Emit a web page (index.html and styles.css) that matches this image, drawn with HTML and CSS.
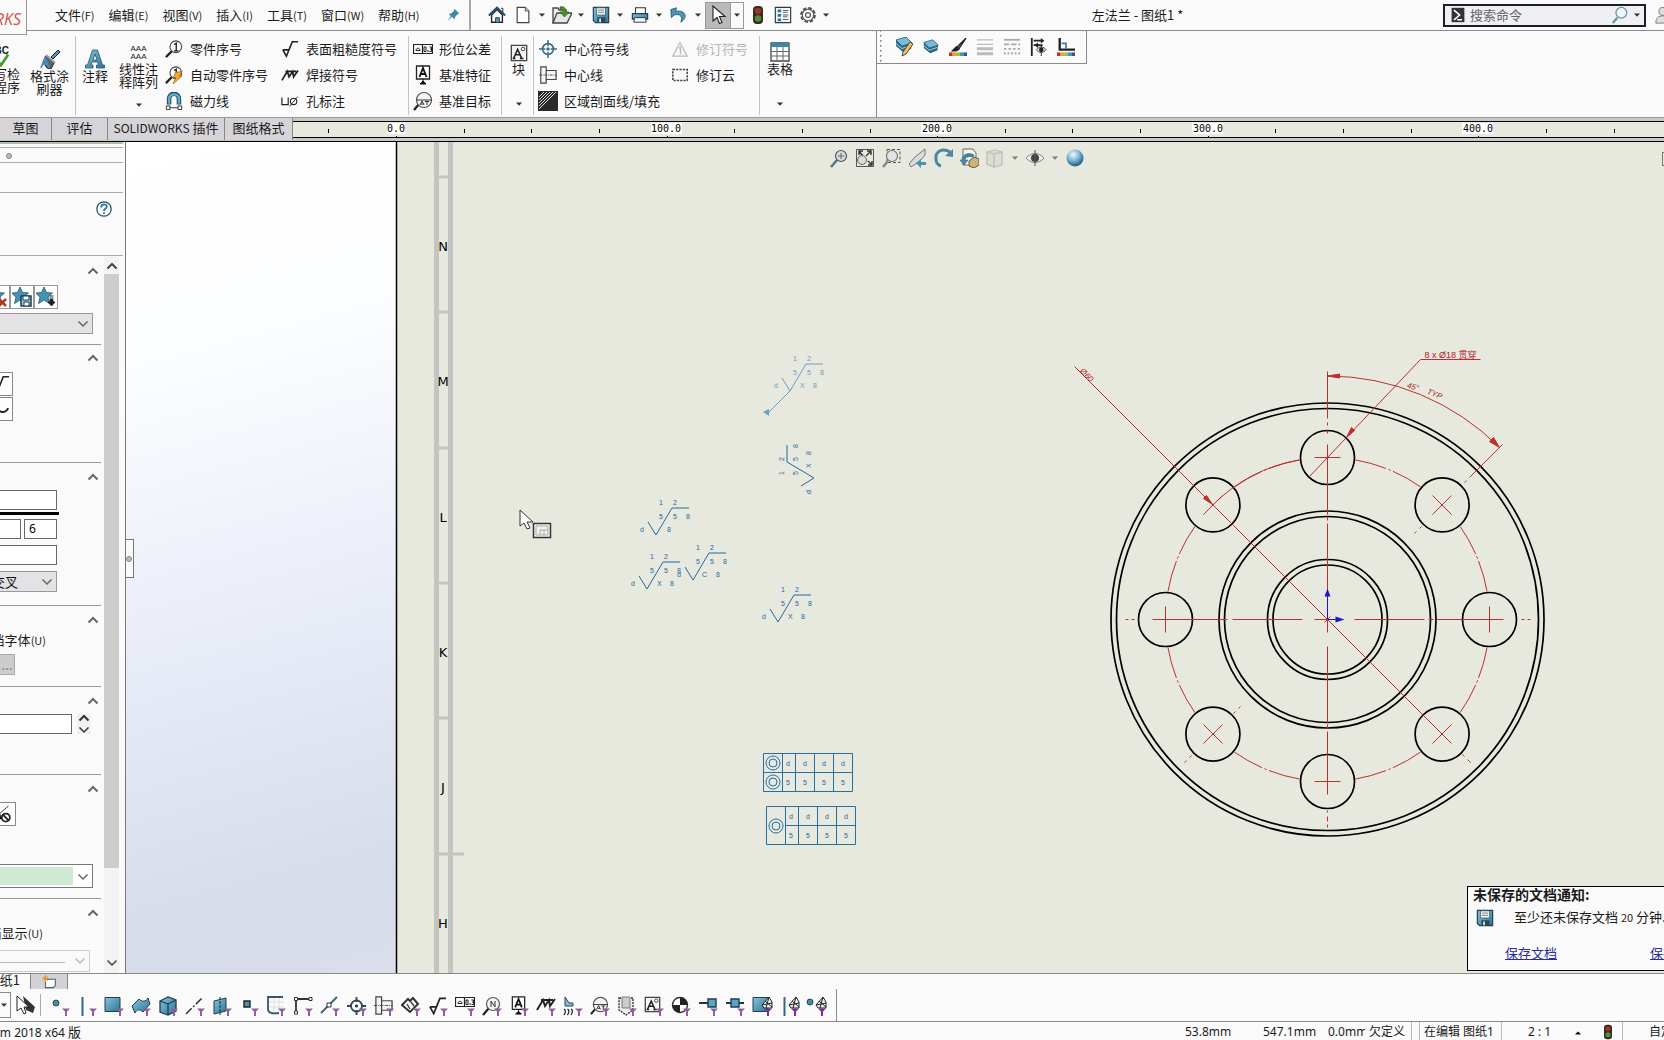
FILE: index.html
```html
<!DOCTYPE html>
<html lang="zh-CN">
<head>
<meta charset="utf-8">
<title>左法兰 - 图纸1</title>
<link rel="stylesheet" href="styles.css">
</head>
<body>
<svg class="sprite" aria-hidden="true">
<defs>
<linearGradient id="blue" x1="0" y1="0" x2="1" y2="1"><stop offset="0" stop-color="#86c3dc"/><stop offset="1" stop-color="#2c7594"/></linearGradient>
<radialGradient id="orb" cx=".4" cy=".3" r=".7"><stop offset="0" stop-color="#f2fbff"/><stop offset=".5" stop-color="#7db8d6"/><stop offset="1" stop-color="#22597a"/></radialGradient>
<symbol id="caret" viewBox="0 0 8 8"><path d="M1 2.500h6L4 5.800z" fill="#333"/></symbol>
<symbol id="up" viewBox="0 0 12 8"><path d="M1.500 6.500 6 2l4.500 4.500" fill="none" stroke="currentColor" stroke-width="2"/></symbol>
<symbol id="down" viewBox="0 0 12 8"><path d="M1.500 1.500 6 6l4.500-4.500" fill="none" stroke="currentColor" stroke-width="1.500"/></symbol>
<symbol id="pin" viewBox="0 0 20 20"><path d="m12 1 7 7-2 .5-4 4-.5 4-4-4L2 19l5-7.500-3.500-3 4-.5 4-4z" fill="#3e86a6"/></symbol>
<symbol id="home" viewBox="0 0 20 20"><path d="M4 10v8h12v-8l-6-6z" fill="#fff" stroke="#222" stroke-width="1.500"/><path d="M1 10.500 10 2l9 8.500" fill="none" stroke="#1f5068" stroke-width="2.500"/><path d="M8.500 18v-5h4v5" fill="#5ba0bd" stroke="#222"/><path d="M14.500 2.500h2V7" stroke="#222" fill="none"/></symbol>
<symbol id="new" viewBox="0 0 20 20"><path d="M3.500 1.500h9l4 4v13h-13z" fill="#fdfdfd" stroke="#444" stroke-width="1.300"/><path d="M12.500 1.500v4h4" fill="#ddd" stroke="#444"/></symbol>
<symbol id="open" viewBox="0 0 20 20"><path d="M1 18V3h5l1 2h7v4" fill="#eee" stroke="#444" stroke-width="1.300"/><path d="m1 18 4-10h15l-5 10z" fill="#e6e8e2" stroke="#444" stroke-width="1.300"/><path d="M8 2c4-1 6 1 6 5h3l-4.500 5L8 7h3c0-2-1-3-3-3z" fill="#49912e" stroke="#255d17" stroke-width=".7"/></symbol>
<symbol id="save" viewBox="0 0 20 20"><path d="M1.500 1.500h17v17H4l-2.500-2.500z" fill="url(#blue)" stroke="#1d3f50" stroke-width="1.300"/><path d="M5 2h10v8H5z" fill="#f1f4f5" stroke="#2c4a58" stroke-width=".7"/><path d="M6.500 4.500h7M6.500 7h7" stroke="#777"/><path d="M6 12.500h9v6H6z" fill="#304650"/><path d="M8 14h2v4H8z" fill="#dbe4e8"/></symbol>
<symbol id="print" viewBox="0 0 20 20"><path d="M5 9V2h11v7" fill="#fff" stroke="#333" stroke-width="1.200"/><path d="M1.500 8.500h17v6h-17z" fill="url(#blue)" stroke="#1d3f50" stroke-width="1.300"/><path d="M4 13h12l1 5H3z" fill="#f6f6f6" stroke="#234"/></symbol>
<symbol id="undo" viewBox="0 0 20 20"><path d="M7 2 1 4l.5 9 3-3c7-2 10 2 7.500 8 8-5 6-14-5.500-12z" fill="#4f94b3" stroke="#24566e"/></symbol>
<symbol id="arrow" viewBox="0 0 20 20"><path d="M5 1v15l4-3.500 2.500 6 2.500-1-2.500-6H17z" fill="#fff" stroke="#222" stroke-width="1.100"/></symbol>
<symbol id="light" viewBox="0 0 20 20"><rect x="5" y="1" width="10" height="18" rx="4" fill="#332b22"/><circle cx="10" cy="6" r="3.300" fill="#a33022"/><circle cx="10" cy="13.500" r="3.300" fill="#4f8d3c"/></symbol>
<symbol id="list" viewBox="0 0 20 20"><path d="M1.500 1.500h17v17h-17z" fill="#f4f7f8" stroke="#2a3d47" stroke-width="1.300"/><path d="M4 4h4v3H4zM4 9h4v3H4zM4 14h4v3H4z" fill="#2f7797"/><path d="M10 5h6M10 7h5M10 10h6M10 12h5M10 15h6" stroke="#555"/></symbol>
<symbol id="gear" viewBox="0 0 20 20"><circle cx="10" cy="10" r="7.500" fill="none" stroke="#555" stroke-width="2.600" stroke-dasharray="3.900 2"/><circle cx="10" cy="10" r="6.300" fill="#fafafa" stroke="#555" stroke-width="1.200"/><circle cx="10" cy="10" r="2.700" fill="none" stroke="#555" stroke-width="1.300"/></symbol>
<symbol id="glass" viewBox="0 0 20 20"><path d="m7 13-5 6" stroke="#6c93a8" stroke-width="2.600"/><circle cx="11.500" cy="7.500" r="6" fill="#eef7fb" stroke="#7a93a0" stroke-width="1.500"/></symbol>
<symbol id="cmd" viewBox="0 0 20 20"><path d="M2 1h16v18H2z" fill="#333"/><path d="m5 4 7 6-7 6M9 16h6" stroke="#fff" stroke-width="2" fill="none"/></symbol>
<symbol id="user" viewBox="0 0 20 20"><circle cx="10" cy="6" r="4.500" fill="#ddd" stroke="#777"/><path d="M2 19c0-6 3-8 8-8s8 2 8 8z" fill="#ddd" stroke="#777"/></symbol>
<symbol id="spell" viewBox="0 0 20 20"><path d="m6 13 4 5 8-12" stroke="#4b9a2e" stroke-width="3" fill="none"/></symbol>
<symbol id="brush" viewBox="0 0 20 20"><path d="m11 8 7-7 2 2-7 7z" fill="#5199b8" stroke="#223"/><path d="m6 7 8 7-3 6-4-1-4-6z" fill="#58656c" stroke="#222"/><path d="m6 6 9 8" stroke="#999" stroke-width="2"/><path d="m1 19 4-10 4 10M3 15h5" stroke="#4a92b2" stroke-width="1.800" fill="none"/></symbol>
<symbol id="note" viewBox="0 0 20 20"><path d="M7.500 1h5l5 15h2v3h-8v-3h2l-1-3H7l-1 3h2v3H.500v-3h2zM10 5l-2 6h4z" fill="url(#blue)" stroke="#24566e" stroke-width=".8"/></symbol>
<symbol id="balloon" viewBox="0 0 20 20"><path d="m8 12-7 7" stroke="#222" stroke-width="2.500"/><circle cx="12" cy="7.500" r="6.500" fill="#fafafa" stroke="#444" stroke-width="1.200"/><path d="m10 5 2.500-1.500V12M10 12h5" stroke="#222" stroke-width="1.500" fill="none"/></symbol>
<symbol id="autob" viewBox="0 0 20 20"><use href="#balloon"/><path d="m12 7 7-1-3 5h3l-10 9 3-7H9z" fill="#f6a92c" stroke="#96611a" stroke-width=".8"/></symbol>
<symbol id="magnet" viewBox="0 0 20 20"><path d="M4.500 14V8c0-8 11-8 11 0v6" fill="none" stroke="#1d4a60" stroke-width="5"/><path d="M4.500 13V8c0-7.500 11-7.500 11 0v5" fill="none" stroke="#66a9c6" stroke-width="2.800"/><path d="M3 17.500h14" stroke="#222"/><path d="M1.500 15.500h4v4h-4zM14.500 15.500h4v4h-4z" fill="#fff" stroke="#222"/></symbol>
<symbol id="rough" viewBox="0 0 20 20"><path d="M2 11h7M2 11l4 7L12.500 2H19" fill="none" stroke="#222" stroke-width="1.800"/></symbol>
<symbol id="weld" viewBox="0 0 20 20"><path d="M1 16 7 6l2 6 4-6 1 6 5-7M5 6h12" fill="none" stroke="#222" stroke-width="1.900"/></symbol>
<symbol id="hole" viewBox="0 0 20 20"><path d="M1 6v8h7V6" fill="none" stroke="#222" stroke-width="1.300"/><circle cx="14" cy="10.500" r="3.500" fill="none" stroke="#222" stroke-width="1.200"/><path d="m9.500 16 9-11" stroke="#222"/></symbol>
<symbol id="gtol" viewBox="0 0 20 20"><path d="M.500 5.500h19v9H.500zM9.500 5v10" fill="#fafafa" stroke="#222" stroke-width="1.200"/><path d="M3 11.500h4c0-3-4-3-4 0M11 8h2v4.500h-2zM15 11v2M16.500 8h2v2h-1 1v2.500h-2" fill="none" stroke="#222"/></symbol>
<symbol id="datum" viewBox="0 0 20 20"><path d="M3.500 1h13v13h-13z" fill="#fff" stroke="#222" stroke-width="1.300"/><path d="m6.500 12 3.500-9 3.500 9M8 9h4" fill="none" stroke="#111" stroke-width="1.800"/><path d="M10 14v3m-3 2h6l-3-3z" stroke="#111" fill="#111"/></symbol>
<symbol id="target" viewBox="0 0 20 20"><path d="m6 13-5 6" stroke="#222" stroke-width="2.200"/><circle cx="11" cy="9" r="7.500" fill="#f5f5f5" stroke="#555" stroke-width="1.200"/><path d="M3.500 9h15M7 14l2-4 2 4M8 13h2.500M12 10.500h4M14 10.500V14" stroke="#333" fill="none"/></symbol>
<symbol id="block" viewBox="0 0 20 20"><path d="M1.500 1.500h17v17h-17z" fill="#f6f6f6" stroke="#444" stroke-width="1.500"/><path d="m4 16 4.500-10L13 16M6 12h5M3 16h3M11 16h4" fill="none" stroke="#222" stroke-width="1.700"/><circle cx="14.500" cy="5.500" r="2" fill="none" stroke="#333"/></symbol>
<symbol id="cmark" viewBox="0 0 20 20"><circle cx="10" cy="10" r="6" fill="none" stroke="#386a80" stroke-width="1.800"/><path d="M10 0v7M10 13v7M0 10h7M13 10h7M8 10h4M10 8v4" stroke="#386a80" stroke-width="1.600"/></symbol>
<symbol id="cline" viewBox="0 0 20 20"><path d="M2 1h6v18H2zM8 5h11v10H8" fill="#f4f4f4" stroke="#444" stroke-width="1.300"/><path d="M0 10h20" stroke="#444" stroke-dasharray="3 1 1 1"/></symbol>
<symbol id="hatch" viewBox="0 0 20 20"><path d="M0 0h20v20H0z" fill="#2a2a2a"/><path d="m1 6 5-5M1 9l8-8M1 12 12 1M1 15 15 1M1 18 18 1" stroke="#ddd"/></symbol>
<symbol id="rev" viewBox="0 0 20 20"><path d="m10 3 8 15H2z" fill="none" stroke="#bbb" stroke-width="1.400"/><path d="M9 9l1.500-1v8" stroke="#bbb" fill="none" stroke-width="1.500"/></symbol>
<symbol id="cloud" viewBox="0 0 20 20"><path d="M2 4h16v12H2z" fill="none" stroke="#444" stroke-width="1.700" stroke-dasharray="2.500 1.200"/></symbol>
<symbol id="table" viewBox="0 0 20 20"><path d="M1 1h18v18H1z" fill="#fff" stroke="#444" stroke-width="1.300"/><path d="M1 1h18v4H1z" fill="#3c86a6"/><path d="M1 9.500h18M1 14h18M7 5v14M13 5v14" stroke="#666"/></symbol>
<symbol id="layer" viewBox="0 0 20 20"><path d="m2 5 10-3 6 6-1 6-8 3-7-6z" fill="#276684"/><path d="m2 5 10-3 6 6-10 3z" fill="#7abbd8" stroke="#2a617b" stroke-width=".8"/><path d="m2 8.500 6 5 9-3" stroke="#b8dcea" fill="none"/></symbol>
<symbol id="layered" viewBox="0 0 20 20"><use href="#layer" y="-2"/><path d="m8 19 1-4 7-10 3 2-7 10z" fill="#eac36c" stroke="#5a4322"/></symbol>
<symbol id="paint" viewBox="0 0 20 20"><path d="M19 0 9 10l2 2z" fill="#4d93b1" stroke="#223" stroke-width="1.500"/><path d="m8 9 4 4-4 2H2z" fill="#222"/></symbol>
<symbol id="rainbow" viewBox="0 0 20 20"><path d="M0 16h4v4H0z" fill="#b73a2c"/><path d="M4 16h4v4H4z" fill="#eda02e"/><path d="M8 16h4v4H8z" fill="#a6bc47"/><path d="M12 16h4v4h-4z" fill="#3e9aa8"/><path d="M16 16h4v4h-4z" fill="#454c8c"/></symbol>
<symbol id="lines" viewBox="0 0 20 20"><path d="M1 2h18M1 7h18" stroke="#bbb" stroke-width="1.500"/><path d="M1 12h18M1 17.500h18" stroke="#bbb" stroke-width="3.200"/></symbol>
<symbol id="styles" viewBox="0 0 20 20"><path d="M1 2h18" stroke="#aaa" stroke-width="2"/><path d="M1 7h18" stroke="#aaa" stroke-width="2" stroke-dasharray="6 2"/><path d="M1 12h18" stroke="#aaa" stroke-width="2" stroke-dasharray="3 2"/><path d="M1 17h18" stroke="#aaa" stroke-width="2.500" stroke-dasharray="2 2"/></symbol>
<symbol id="hide" viewBox="0 0 20 20"><path d="M2 0v20" stroke="#222" stroke-width="2"/><path d="M4 3h9M4 8h10" stroke="#222" stroke-width="2"/><path d="m12 0 4 3-4 3zM9 5 5 8l4 3z" fill="#222"/><path d="M7 13c3-4 8-4 11 0-3 4-8 4-11 0z" fill="#ddd" stroke="#444"/><circle cx="12.500" cy="13" r="2.500" fill="#222"/><path d="M12.500 8v12" stroke="#222"/></symbol>
<symbol id="corner" viewBox="0 0 20 20"><path d="M3 0v13h17" fill="none" stroke="#222" stroke-width="2.600"/><path d="M5 6h5v6" fill="none" stroke="#3e86a6" stroke-width="2"/></symbol>
<symbol id="zoomfit" viewBox="0 0 20 20"><path d="M1.500 1.500h17v17h-17z" fill="none" stroke="#555"/><path d="m11 8 5-5m-4 0h4v4M8 8 4 3m0 4V3h4M13 13l4 4m0-4v4h-4" stroke="#333" stroke-width="1.400" fill="none"/><circle cx="7" cy="12" r="4.500" fill="#d7dcdc" stroke="#666"/></symbol>
<symbol id="zoom1" viewBox="0 0 20 20"><path d="m8 12-6 7" stroke="#50788a" stroke-width="2.600"/><circle cx="12" cy="8" r="5.500" fill="#d3dada" stroke="#555" stroke-width="1.200"/><path d="M12 5v6M9 8h6" stroke="#666"/></symbol>
<symbol id="zoomarea" viewBox="0 0 20 20"><path d="M6 1.500h13v13H6z" fill="none" stroke="#555" stroke-dasharray="3 2"/><path d="m7 13-5 6" stroke="#888" stroke-width="2.600"/><circle cx="11" cy="8" r="5.500" fill="#dfe4e4" stroke="#777" stroke-width="1.200"/></symbol>
<symbol id="prev" viewBox="0 0 20 20"><path d="M18 1 8 9l-6 7 2 3 9-6 5-6z" fill="#d9dddb" stroke="#777"/><path d="m9 15 5-4v3h5v3h-5v3z" fill="#4c91ad"/></symbol>
<symbol id="rotate" viewBox="0 0 20 20"><path d="M17 4C9-1 2 4 3 11c0 3 2 6 5 7" fill="none" stroke="#4a87a3" stroke-width="3"/><path d="m12 8 8-7v8z" fill="#4a87a3"/></symbol>
<symbol id="sheet" viewBox="0 0 20 20"><path d="M4 1h10l3 4v12H4z" fill="#f5f5ee" stroke="#666"/><path d="M15 7C10 4 3 6 3 12l-2 0 4 5 4-5H6c0-3 4-4 8-3z" fill="#448baa" stroke="#24566e" stroke-width=".5"/><path d="m10 13 5-4 5 2v6l-5 3-5-2z" fill="#cbb47c" stroke="#665a3a"/></symbol>
<symbol id="cube" viewBox="0 0 20 20"><path d="M2 4l8-2 7 2v13l-8 2-7-3zM2 4l7 2v13M9 6l8-2" fill="#dcded6" stroke="#bbbdb5" stroke-width="1.200"/></symbol>
<symbol id="eye" viewBox="0 0 20 20"><path d="M1 10c5-6 13-6 18 0-5 6-13 6-18 0z" fill="#eee" stroke="#888"/><circle cx="10" cy="10" r="4" fill="#444"/><path d="M10 2v16" stroke="#555"/></symbol>
<symbol id="ball" viewBox="0 0 20 20"><circle cx="10" cy="10" r="8.500" fill="url(#orb)"/></symbol>
<symbol id="help" viewBox="0 0 20 20"><circle cx="10" cy="10" r="9" fill="#f7fafb" stroke="#23485a" stroke-width="1.500"/><path d="M6.500 8c0-5 7-5 7-1 0 3-3.500 2.500-3.500 5.500M10 14v2.200" fill="none" stroke="#2f7797" stroke-width="2.200"/></symbol>
<symbol id="star" viewBox="0 0 20 20"><path d="m8 0 2.500 5.500 6 .5-4.500 4 1.500 6.500L8 13l-5.500 3.500L4 10-.5 6l6-.5z" fill="#4393b5" stroke="#24566e" stroke-width=".8"/></symbol>
<symbol id="starx" viewBox="0 0 20 20"><use href="#star"/><path d="m11 12 7 7m0-7-7 7" stroke="#a93b27" stroke-width="2.500"/></symbol>
<symbol id="stars" viewBox="0 0 20 20"><use href="#star"/><path d="M9 9h10v10H9z" fill="#9cc5d8" stroke="#1d3f50" stroke-width="1.500"/><path d="M11 9h6v4h-6zM12 15h5v4h-5z" fill="#fff" stroke="#1d3f50"/></symbol>
<symbol id="stard" viewBox="0 0 20 20"><use href="#star"/><path d="M13.500 9h4M13.500 11h4M14 12.500h3V15h2l-3.500 4-3.500-4h2z" fill="#222" stroke="#222"/></symbol>
<symbol id="fun" viewBox="0 0 22 20"><path d="M12 12.500h8l-3 3V20h-2v-4.500z" fill="#8c629b"/></symbol>
<symbol id="f-pt" viewBox="0 0 22 20"><circle cx="6" cy="7" r="3" fill="#4a8aa5" stroke="#24485a"/></symbol>
<symbol id="f-edge" viewBox="0 0 22 20"><path d="M5.500 1v19" stroke="#2e6a84" stroke-width="2"/></symbol>
<symbol id="f-face" viewBox="0 0 22 20"><path d="M1 1.500h15v14H1z" fill="url(#blue)" stroke="#1d3f50"/></symbol>
<symbol id="f-surf" viewBox="0 0 22 20"><path d="m1 10 7-7c3 3 7 3 9-1l2 6-7 8C9 13 6 13 4 17z" fill="url(#blue)" stroke="#1d3f50"/></symbol>
<symbol id="f-body" viewBox="0 0 22 20"><path d="m2 5 8-4 8 3v11l-8 4-8-3zM2 5l8 3v11M10 8l8-4" fill="url(#blue)" stroke="#1d3f50" stroke-width="1.300"/></symbol>
<symbol id="f-axis" viewBox="0 0 22 20"><path d="M1 18 18 1" stroke="#333" stroke-width="1.500" stroke-dasharray="8 2 2 2"/></symbol>
<symbol id="f-plane" viewBox="0 0 22 20"><path d="m2 5 12-3v13L2 18z" fill="url(#blue)" stroke="#1d3f50"/><path d="M8 1v18" stroke="#222" stroke-dasharray="3 1"/></symbol>
<symbol id="f-spt" viewBox="0 0 22 20"><path d="M5 5h6v6H5z" fill="#4a94b3" stroke="#222" stroke-width="1.400"/></symbol>
<symbol id="f-sk" viewBox="0 0 22 20"><path d="M3 6h15M3 11h15M8 2v14M13 2v14" stroke="#ddd"/><path d="M17 1H2v12c0 4 4 5 11 4" fill="none" stroke="#33566a" stroke-width="1.800"/></symbol>
<symbol id="f-seg" viewBox="0 0 22 20"><path d="M3 17V3h15" stroke="#333" stroke-width="1.800" fill="none"/><path d="M1.500 15h3v3h-3zM1.500 1.500h3v3h-3zM16 1.500h3v3h-3z" fill="#fff" stroke="#333"/></symbol>
<symbol id="f-mid" viewBox="0 0 22 20"><path d="M1 17 17 1" stroke="#3f6678" stroke-width="2"/><path d="M7 7h4v4H7z" fill="#fff" stroke="#333"/></symbol>
<symbol id="f-cm" viewBox="0 0 22 20"><circle cx="9.500" cy="10" r="5.500" fill="none" stroke="#345" stroke-width="1.800"/><path d="M9.500 1v5M9.500 14v5M0 10h5M14 10h5M8 10h3M9.500 8.500v3" stroke="#345" stroke-width="1.800"/></symbol>
<symbol id="f-dim" viewBox="0 0 22 20"><path d="m1 9 6-6 2 2 3-3 5 6-8 8z" fill="#fafafa" stroke="#333" stroke-width="2"/><path d="m6 8 3 5m1-7 3 4" stroke="#333" stroke-width="1.300"/></symbol>
<symbol id="f-cos" viewBox="0 0 22 20"><path d="M2 10V1l4 6h4v3z" fill="#8bbccf" stroke="#24485a"/><path d="M1 13c3 2 1 4 0 6M4.500 13c3 2 1 4 0 6M8 13c3 2 1 4 0 6" stroke="#222" fill="none" stroke-width="1.200"/></symbol>
<symbol id="f-end" viewBox="0 0 22 20"><path d="M2 2h14v12l-7 5-7-5z" fill="#eee" stroke="#333" stroke-width="1.400" stroke-dasharray="2 1"/><path d="M5 1h8v11H5z" fill="#ccc" stroke="#555" stroke-width=".7"/></symbol>
<symbol id="f-com" viewBox="0 0 22 20"><circle cx="9" cy="9" r="7.500" fill="#fff" stroke="#333" stroke-width="1.400"/><path d="M9 9V1.500A7.500 7.500 0 0 1 16.500 9zM9 9v7.500A7.500 7.500 0 0 1 1.500 9z" fill="#222"/></symbol>
<symbol id="f-c1" viewBox="0 0 22 20"><path d="M1 7h9" stroke="#234" stroke-width="2"/><path d="M10 3h8v8h-8z" fill="#5ba4c2" stroke="#1d3f50" stroke-width="1.400"/></symbol>
<symbol id="f-c2" viewBox="0 0 22 20"><path d="M1 7h18" stroke="#234" stroke-width="2"/><path d="M6 3h8v8H6z" fill="#5ba4c2" stroke="#1d3f50" stroke-width="1.400"/></symbol>
<symbol id="web" viewBox="0 0 22 20"><path d="m10 9 7-8 3 5v6h-8z" fill="#eee" stroke="#222"/><path d="m10 9 10-2M13 5l7 6M17 1l-3 11" stroke="#222"/><path d="M12 12.500h8l-3 3V20h-2v-4.500z" fill="#7c2f93"/></symbol>
<g id="fin"><path d="M-8-13 0 0 16-27H33" fill="none" stroke="currentColor"/><text class="tiny" x="3" y="-30">1</text><text class="tiny" x="17" y="-30">2</text><text class="tiny" x="3" y="-16">5</text><text class="tiny" x="17" y="-16">5</text><text class="tiny" x="30" y="-16">8</text><text class="tiny" x="-16" y="-3">d</text></g>
</defs>
</svg>

<div class="app">
<header class="menubar">
  <div class="logo">SOLIDWORKS</div>
  <nav class="menus">
    <button>文件<small>(F)</small></button><button>编辑<small>(E)</small></button><button>视图<small>(V)</small></button><button>插入<small>(I)</small></button><button>工具<small>(T)</small></button><button>窗口<small>(W)</small></button><button>帮助<small>(H)</small></button>
  </nav>
  <button class="pin" aria-label="固定"><svg class="i14"><use href="#pin"/></svg></button>
  <div class="quick">
    <button class="q" aria-label="主页"><svg class="i18"><use href="#home"/></svg></button>
    <button class="q w" aria-label="新建"><svg class="i18"><use href="#new"/></svg></button><button class="c" aria-label="新建选项"><svg class="i8"><use href="#caret"/></svg></button>
    <button class="q w" aria-label="打开"><svg class="i20"><use href="#open"/></svg></button><button class="c" aria-label="打开选项"><svg class="i8"><use href="#caret"/></svg></button>
    <button class="q w" aria-label="保存"><svg class="i18"><use href="#save"/></svg></button><button class="c" aria-label="保存选项"><svg class="i8"><use href="#caret"/></svg></button>
    <button class="q w" aria-label="打印"><svg class="i18"><use href="#print"/></svg></button><button class="c" aria-label="打印选项"><svg class="i8"><use href="#caret"/></svg></button>
    <button class="q w" aria-label="撤消"><svg class="i18"><use href="#undo"/></svg></button><button class="c" aria-label="撤消选项"><svg class="i8"><use href="#caret"/></svg></button>
    <span class="pick"><button class="on" aria-label="选择"><svg class="i20"><use href="#arrow"/></svg></button><button class="c" aria-label="选择选项"><svg class="i8"><use href="#caret"/></svg></button></span>
    <button class="q" aria-label="重建模型"><svg class="i20"><use href="#light"/></svg></button>
    <button class="q" aria-label="文件属性"><svg class="i18"><use href="#list"/></svg></button>
    <button class="q" aria-label="选项"><svg class="i18"><use href="#gear"/></svg></button><button class="c" aria-label="更多选项"><svg class="i8"><use href="#caret"/></svg></button>
  </div>
  <div class="title">左法兰 - 图纸1 *</div>
  <div class="search"><svg class="i16"><use href="#cmd"/></svg><input type="text" placeholder="搜索命令" aria-label="搜索命令"><svg class="i18"><use href="#glass"/></svg><svg class="i8"><use href="#caret"/></svg></div>
  <button class="user" aria-label="登录"><svg class="i18"><use href="#user"/></svg></button>
</header>

<section class="ribbonrow">
  <div class="ribbon">
    <div class="grp g0">
      <button class="big spell"><span class="abc">ABC</span><svg class="i18"><use href="#spell"/></svg><span>拼写检<br>验程序</span></button>
      <button class="big"><svg class="i20"><use href="#brush"/></svg><span>格式涂<br>刷器</span></button>
    </div>
    <div class="grp g1">
      <button class="big"><svg class="i20"><use href="#note"/></svg><span>注释</span></button>
      <button class="big patt"><span class="aaa">AAA<br>AAA</span><span>线性注<br>释阵列</span><svg class="i8"><use href="#caret"/></svg></button>
      <div class="col c1">
        <button><svg class="i18"><use href="#balloon"/></svg>零件序号</button>
        <button><svg class="i18"><use href="#autob"/></svg>自动零件序号</button>
        <button><svg class="i18"><use href="#magnet"/></svg>磁力线</button>
      </div>
      <div class="col c2">
        <button><svg class="i18"><use href="#rough"/></svg>表面粗糙度符号</button>
        <button><svg class="i18"><use href="#weld"/></svg>焊接符号</button>
        <button><svg class="i18"><use href="#hole"/></svg>孔标注</button>
      </div>
    </div>
    <div class="grp g2"><div class="col">
        <button><svg class="i20"><use href="#gtol"/></svg>形位公差</button>
        <button><svg class="i20"><use href="#datum"/></svg>基准特征</button>
        <button><svg class="i20"><use href="#target"/></svg>基准目标</button>
    </div></div>
    <div class="grp g3"><button class="big tall"><svg class="i18"><use href="#block"/></svg><span>块</span><svg class="i8"><use href="#caret"/></svg></button></div>
    <div class="grp g4">
      <div class="col c3">
        <button><svg class="i18"><use href="#cmark"/></svg>中心符号线</button>
        <button><svg class="i18"><use href="#cline"/></svg>中心线</button>
        <button><svg class="i20"><use href="#hatch"/></svg>区域剖面线/填充</button>
      </div>
      <div class="col">
        <button disabled><svg class="i18"><use href="#rev"/></svg>修订符号</button>
        <button><svg class="i18"><use href="#cloud"/></svg>修订云</button>
      </div>
    </div>
    <div class="grp g5"><button class="big tall"><svg class="i20"><use href="#table"/></svg><span>表格</span><svg class="i8"><use href="#caret"/></svg></button></div>
  </div>
  <div class="linebar">
    <button aria-label="图层属性"><svg class="i20"><use href="#layered"/></svg></button>
    <button aria-label="更改图层"><svg class="i18"><use href="#layer"/></svg></button>
    <button aria-label="线色"><svg class="i18"><use href="#paint"/><use href="#rainbow"/></svg></button>
    <button aria-label="线粗"><svg class="i18"><use href="#lines"/></svg></button>
    <button aria-label="线条样式"><svg class="i18"><use href="#styles"/></svg></button>
    <button aria-label="隐藏边线"><svg class="i18"><use href="#hide"/></svg></button>
    <button aria-label="颜色显示模式"><svg class="i18"><use href="#corner"/><use href="#rainbow"/></svg></button>
  </div>
</section>

<div class="tabrow">
  <div class="tabs"><button class="t1">草图</button><button class="t2">评估</button><button class="t3"><span><span class="latin">SOLIDWORKS</span> 插件</span></button><button class="t4">图纸格式</button></div>
  <svg class="ruler"><g transform="translate(-293 -121)">
    <path d="M328 128v4M464 128v4M531 128v4M599 128v4M734 128v4M802 128v4M870 128v4M1005 128v4M1072 128v4M1140 128v4M1275 128v4M1343 128v4M1411 128v4M1546 128v4M1614 128v4" stroke="#000" transform="translate(.5 0)"/>
    <path d="M396 135v3M667 135v3M937 135v3M1208 135v3M1478 135v3" stroke="#000" transform="translate(.5 0)"/>
    <path d="M387 122h18v11h-18zM651 122h31v11h-31zM921 122h31v11h-31zM1192 122h31v11h-31zM1462 122h31v11h-31z" fill="#fff"/>
    <text x="396" y="131">0.0</text><text x="666" y="131">100.0</text><text x="937" y="131">200.0</text><text x="1208" y="131">300.0</text><text x="1478" y="131">400.0</text>
  </g></svg>
</div>

<main class="work">
  <aside class="panel">
    <div class="p1"></div><div class="p2"><i class="dot"></i></div><div class="p3"></div>
    <div class="p4"><button aria-label="帮助"><svg class="i16"><use href="#help"/></svg></button></div>
    <div class="pbody">
      <div class="secs">
        <section class="s1"><button class="fold" aria-label="折叠样式"><svg class="chev"><use href="#up"/></svg></button>
          <div class="stars"><button aria-label="删除样式"><svg class="i20"><use href="#starx"/></svg></button><button aria-label="保存样式"><svg class="i20"><use href="#stars"/></svg></button><button aria-label="装入样式"><svg class="i20"><use href="#stard"/></svg></button></div>
          <div class="sel w93 gray"><select aria-label="样式"><option></option></select><svg class="chev"><use href="#down"/></svg></div></section>
        <section class="s2"><button class="fold" aria-label="折叠符号"><svg class="chev"><use href="#up"/></svg></button>
          <button class="sq" aria-label="基本"><svg class="i18"><use href="#rough"/></svg></button>
          <button class="sq" aria-label="局部"><svg class="i18" viewBox="0 0 20 20"><path d="M5 8c3 7 10 7 13 1" fill="none" stroke="#222" stroke-width="2.200"/></svg></button></section>
        <section class="s3"><button class="fold" aria-label="折叠符号布局"><svg class="chev"><use href="#up"/></svg></button>
          <input class="w57" type="text" aria-label="加工方法">
          <div class="thick"></div>
          <div class="pair"><input class="w21" type="text" aria-label="最小粗糙度"><input class="w33" type="text" value="6" aria-label="最大粗糙度"></div>
          <input class="w57" type="text" aria-label="取样长度">
          <div class="sel w57 gray"><select aria-label="刀痕方向"><option>交叉</option></select><svg class="chev"><use href="#down"/></svg></div></section>
        <section class="s4"><button class="fold" aria-label="折叠格式"><svg class="chev"><use href="#up"/></svg></button>
          <div class="lab l46"><span>使用文档字体<small>(U)</small></span></div>
          <button class="dots" disabled>...</button></section>
        <section class="s5"><button class="fold" aria-label="折叠角度"><svg class="chev"><use href="#up"/></svg></button>
          <div class="pair"><input class="w72" type="text" aria-label="角度"><span class="spin"><svg class="chev"><use href="#up"/></svg><svg class="chev"><use href="#down"/></svg></span></div></section>
        <section class="s6"><button class="fold" aria-label="折叠引线"><svg class="chev"><use href="#up"/></svg></button>
          <button class="sq w16" aria-label="无引线"><svg class="i18" viewBox="0 0 20 20"><path d="m0 14 15-13" stroke="#222"/><path d="m0 14 6-4 1 6z"/><circle cx="12" cy="14" r="4.500" fill="#fff" stroke="#222" stroke-width="2"/><path d="m9 11 6 6" stroke="#222" stroke-width="2"/></svg></button>
          <div class="sel w93 green"><select aria-label="箭头样式"><option></option></select><svg class="chev"><use href="#down"/></svg></div></section>
        <section class="s7"><button class="fold" aria-label="折叠引线样式"><svg class="chev"><use href="#up"/></svg></button>
          <div class="lab l43"><span>使用文档显示<small>(U)</small></span></div>
          <div class="sel w90 off"><select aria-label="线条样式" disabled><option></option></select><svg class="chev"><use href="#down"/></svg></div></section>
      </div>
      <div class="scroll"><svg class="chev"><use href="#up"/></svg><div class="thumb"></div><svg class="chev"><use href="#down"/></svg></div>
    </div>
  </aside>
  <section class="view">
    <svg class="sheet">
    <g transform="translate(-126 -142)">
      <rect x="396" y="140" width="4000" height="3000" fill="#e7e9df"/>
      <path d="M396.500 140v3000" stroke="#000" stroke-width="1.500"/>
      <path d="M436.500 140v3000M450.500 140v3000" stroke="#c4c4c1" stroke-width="5"/>
      <path d="M439 177h9M439 312h9M439 448h9M439 583h9M439 718h9M439 854h25" stroke="#c4c4c1" stroke-width="3"/>
      <g class="zone"><text x="443" y="251">N</text><text x="443" y="386">M</text><text x="443" y="522">L</text><text x="443" y="657">K</text><text x="443" y="792">J</text><text x="443" y="928">H</text></g>
      <g class="fin">
        <g class="pale"><g transform="translate(790 391)"><use href="#fin"/><text class="tiny" x="10" y="-3">X</text><text class="tiny" x="23" y="-3">8</text><path d="M0 0-21 21" stroke="currentColor"/><path d="m-27 21 6-3v7z" fill="currentColor"/></g></g>
        <g transform="translate(814 478) rotate(-90)"><use href="#fin"/><text class="tiny" x="10" y="-3">X</text><text class="tiny" x="23" y="-3">8</text></g>
        <g transform="translate(656 535)"><use href="#fin"/><text class="tiny" x="11" y="-3">8</text></g>
        <g transform="translate(647 589)"><use href="#fin"/><text class="tiny" x="10" y="-3">X</text><text class="tiny" x="23" y="-3">8</text></g>
        <g transform="translate(693 580)"><use href="#fin"/><text class="tiny" x="9" y="-3">C</text><text class="tiny" x="23" y="-3">8</text></g>
        <g transform="translate(778 622)"><use href="#fin"/><text class="tiny" x="10" y="-3">X</text><text class="tiny" x="23" y="-3">8</text></g>
      </g>
      <g class="tbl">
        <path d="M763.500 753.500h89v38h-89zM763.500 772.500h89M782.500 753.500v38M795.500 753.500v38M814.500 753.500v38M833.500 753.500v38"/>
        <path d="M766.500 806.500h89v38h-89zM785.500 825.500h70M785.500 806.500v38M798.500 806.500v38M817.500 806.500v38M836.500 806.500v38"/>
        <circle cx="773" cy="763" r="7"/><circle cx="773" cy="763" r="4"/><circle cx="773" cy="782" r="7"/><circle cx="773" cy="782" r="4"/><circle cx="776" cy="826" r="7"/><circle cx="776" cy="826" r="4"/>
        <text class="tiny" x="786" y="766">d</text><text class="tiny" x="803" y="766">d</text><text class="tiny" x="822" y="766">d</text><text class="tiny" x="841" y="766">d</text>
        <text class="tiny" x="786" y="785">5</text><text class="tiny" x="803" y="785">5</text><text class="tiny" x="822" y="785">5</text><text class="tiny" x="841" y="785">5</text>
        <text class="tiny" x="789" y="819">d</text><text class="tiny" x="806" y="819">d</text><text class="tiny" x="825" y="819">d</text><text class="tiny" x="844" y="819">d</text>
        <text class="tiny" x="789" y="838">5</text><text class="tiny" x="806" y="838">5</text><text class="tiny" x="825" y="838">5</text><text class="tiny" x="844" y="838">5</text>
      </g>
      <g transform="translate(1327.500 619.500)">
        <g fill="none" stroke="#000" stroke-width="1.700">
          <circle r="216.500"/><circle r="211"/><circle r="108.500"/><circle r="103"/><circle r="60"/><circle r="54.500"/>
          <circle cx="162" r="27"/><circle cx="-162" r="27"/><circle cy="162" r="27"/><circle cy="-162" r="27"/>
          <circle cx="114.600" cy="114.600" r="27"/><circle cx="-114.600" cy="114.600" r="27"/><circle cx="114.600" cy="-114.600" r="27"/><circle cx="-114.600" cy="-114.600" r="27"/>
        </g>
        <g class="red">
          <circle r="162" pathLength="800" stroke-dasharray="0 22 25 2 2 2 25 22"/>
          <path d="M-114.600-114.600A162 162 0 0 1-28-159.600"/>
          <path d="M0-248v47m0 4v3m0 5v3M0-175v70m0 2v4m0 3v70M0-13v26M0 27v76m0 2v4m0 3v63m0 16v2m0 4v5m0 3v3M-202 0h3m3 0h3m3 0h2M-175 0h75m5 0h70M-13 0h26M27 0h70m4 0h5m3 0h67M194 0h3m3 0h3"/>
          <path d="M-13-162h26M-13 162h26M-162-13v26M162-13v26M105-124l19 19m0-19-19 19M-124 105l19 19m0-19-19 19M105 124l19-19M-124-105l19-19"/>
          <path d="m175-175-33 33m-3 3-2 2M94-93l-2 2m-3 3-2 2M-94 94l2-2m3-3 2-2M-143 143l2-2m3-3 2-2M135 135l2 2m3 3 3 3"/>
          <path d="M-253-253 124 124M153-260H93L-18-143"/>
          <path d="M0-243.500A243.500 243.500 0 0 1 172-172"/>
          <path class="head" d="m0-243.500 12-2v4zM172-172l-10-6 4-4zM-115-115l-9-6 3-3zM19-182l8-7-3-3z"/>
          <text class="tilt" transform="translate(-248 -248) rotate(45)">Ø60</text>
          <text class="tilt" transform="translate(79 -232) rotate(17)">45°</text><text class="tilt" transform="translate(99 -226) rotate(22)">TYP</text>
          <text x="97" y="-262">8 x Ø18 贯穿</text>
        </g>
        <path d="M0 0v-25M0 0h10" stroke="#2412c8"/><path d="M0-31-3-23h6zM17 0 8-3v6z" fill="#2412c8"/><path d="m-3-3 6 6m0-6-6 6" stroke="#a33"/>
      </g>
      <path d="M520 510v16l4-3 3 6 3-1-3-6h6z" fill="#fff" stroke="#333"/>
      <rect x="533.500" y="523.500" width="17" height="14" fill="#f2f2ee" stroke="#333" stroke-width="1.500"/><path d="M536 526h12v9h-12zM540 535v-5h8M544 530v5" fill="none" stroke="#aaa"/>
    </g></svg>
    <div class="hud">
      <button aria-label="整屏显示全图"><svg class="i20"><use href="#zoom1"/></svg></button><button aria-label="整屏显示"><svg class="i20"><use href="#zoomfit"/></svg></button><button aria-label="局部放大"><svg class="i20"><use href="#zoomarea"/></svg></button><button aria-label="上一视图"><svg class="i20"><use href="#prev"/></svg></button><button aria-label="旋转视图"><svg class="i20"><use href="#rotate"/></svg></button><button aria-label="3D 工程图视图"><svg class="i20"><use href="#sheet"/></svg></button><button aria-label="显示样式"><svg class="i20"><use href="#cube"/></svg></button><button class="c" aria-label="显示样式选项"><svg class="i8"><use href="#caret"/></svg></button><button aria-label="隐藏显示项目"><svg class="i20"><use href="#eye"/></svg></button><button class="c" aria-label="隐藏选项"><svg class="i8"><use href="#caret"/></svg></button><button aria-label="外观"><svg class="i20"><use href="#ball"/></svg></button>
    </div>
    <button class="flyout" aria-label="收起面板"><i class="dot"></i></button>
    <i class="winbtn"></i>
    <div class="toast">
      <strong>未保存的文档通知:</strong>
      <div class="msg"><svg class="i18"><use href="#save"/></svg><span>至少还未保存文档 <small>20</small> 分钟.</span></div>
      <div class="links"><a href="#save">保存文档</a><a href="#all">保存所有文档</a></div>
    </div>
  </section>
</main>

<footer class="bottom">
  <div class="sheets"><button class="st"><span>图纸1</span></button><button class="add" aria-label="添加图纸"><svg class="i14" viewBox="0 0 20 20"><path d="M5 6h14v9l-3 3H5z" fill="#fff" stroke="#3b6475" stroke-width="1.500"/><path d="M5 0v10M0 5h10M2 2l6 6m0-6L2 8" stroke="#e79a2c" stroke-width="1.500"/></svg></button></div>
  <div class="filters">
    <button class="fcombo" aria-label="过滤器选项"><svg class="i8"><use href="#caret"/></svg></button>
    <button class="fsel" aria-label="选择"><svg class="i20" viewBox="0 0 20 20"><path d="m7 1 12 11-2 6-7-3z" fill="#333"/><path d="M1 1v15l4-3 3 6 2-1-2-6h5z" fill="#fff" stroke="#222"/></svg></button>
    <div class="flist">
      <button aria-label="顶点"><svg><use href="#f-pt"/><use href="#fun"/></svg></button><button aria-label="边线"><svg><use href="#f-edge"/><use href="#fun"/></svg></button><button aria-label="面"><svg><use href="#f-face"/><use href="#fun"/></svg></button><button aria-label="曲面实体"><svg><use href="#f-surf"/><use href="#fun"/></svg></button><button aria-label="实体"><svg><use href="#f-body"/><use href="#fun"/></svg></button><button aria-label="基准轴"><svg><use href="#f-axis"/><use href="#fun"/></svg></button><button aria-label="基准面"><svg><use href="#f-plane"/><use href="#fun"/></svg></button><button aria-label="草图点"><svg><use href="#f-spt"/><use href="#fun"/></svg></button><button aria-label="草图"><svg><use href="#f-sk"/><use href="#fun"/></svg></button><button aria-label="草图线段"><svg><use href="#f-seg"/><use href="#fun"/></svg></button><button aria-label="中点"><svg><use href="#f-mid"/><use href="#fun"/></svg></button><button aria-label="中心符号"><svg><use href="#f-cm"/><use href="#fun"/></svg></button><button aria-label="中心线"><svg><use href="#cline" width="19" height="19"/><use href="#fun"/></svg></button><button aria-label="尺寸"><svg><use href="#f-dim"/><use href="#fun"/></svg></button><button aria-label="表面粗糙度"><svg><use href="#rough" width="19" height="20"/><use href="#fun"/></svg></button><button aria-label="形位公差"><svg><use href="#gtol" y="-4" width="20" height="20"/><use href="#fun"/></svg></button><button aria-label="注释"><svg viewBox="0 0 22 20"><path d="m7 12-6 7" stroke="#222" stroke-width="2.200"/><circle cx="11" cy="8" r="6.500" fill="#f5f5f5" stroke="#555" stroke-width="1.200"/><path d="M9 11V5l4 6V5" stroke="#333" fill="none"/><use href="#fun"/></svg></button><button aria-label="基准特征"><svg><use href="#datum" width="19" height="19"/><use href="#fun"/></svg></button><button aria-label="焊接符号"><svg><use href="#weld" y="-2" width="20" height="20"/><use href="#fun"/></svg></button><button aria-label="焊缝"><svg><use href="#f-cos"/><use href="#fun"/></svg></button><button aria-label="基准目标"><svg><use href="#target" width="19" height="19"/><use href="#fun"/></svg></button><button aria-label="装饰螺纹线"><svg><use href="#f-end"/><use href="#fun"/></svg></button><button aria-label="块"><svg><use href="#block" width="17" height="17"/><use href="#fun"/></svg></button><button aria-label="质心"><svg><use href="#f-com"/><use href="#fun"/></svg></button><button aria-label="连接点"><svg><use href="#f-c1"/><use href="#fun"/></svg></button><button aria-label="步路点"><svg><use href="#f-c2"/><use href="#fun"/></svg></button><button aria-label="网格面"><svg><use href="#f-face"/><use href="#web"/></svg></button><button aria-label="网格边线"><svg><use href="#f-edge"/><use href="#web"/></svg></button><button aria-label="网格顶点"><svg><use href="#f-pt" x="-2" y="-1"/><use href="#web"/></svg></button>
    </div>
  </div>
</footer>
<div class="status">
  <div class="ver"><span>SOLIDWORKS Premium 2018 x64 <b>版</b></span></div>
  <span class="x">53.8mm</span><span class="y">547.1mm</span><span class="z">0.0mm</span><span class="def">欠定义</span><span class="edit">在编辑 图纸1</span><span class="scale">2 : 1</span><span class="tri"><svg class="i8" viewBox="0 0 8 8"><path d="m1 5.500 3-3 3 3z"/></svg></span><span class="tl"><svg class="i16"><use href="#light"/></svg></span><span class="cust">自定义</span>
</div>
</div>
</body>
</html>
```
FILE: styles.css
```css
* { box-sizing: border-box; }
body { margin: 0; background: #fafafa; color: #1a1a1a; font: 13px/16px "Noto Sans CJK SC", "Noto Sans", sans-serif; }
button { margin: 0; padding: 0; border: 0; background: none; color: inherit; font: inherit; display: flex; align-items: center; justify-content: center; flex: none; white-space: nowrap; }
button[disabled] { color: #b5b5b5; }
small { font-size: 11px; }
svg { display: block; flex: none; }
.sprite { position: absolute; width: 0; height: 0; }
.i8 { width: 8px; height: 8px; }
.i14 { width: 14px; height: 14px; }
.i16 { width: 16px; height: 16px; }
.i18 { width: 18px; height: 18px; }
.i20 { width: 20px; height: 20px; }
.chev { width: 12px; height: 8px; color: #666; }
.dot { width: 6px; height: 6px; border-radius: 50%; background: #bbb; border: 1px solid #888; }

.app { min-height: 100vh; display: flex; flex-direction: column; overflow: hidden; }

.menubar { position: relative; height: 31px; flex: none; display: flex; align-items: center; border-bottom: 1px solid #8a8a8a; }
.logo { position: absolute; left: 0; top: 0; z-index: 2; width: 27px; height: 35px; padding: 8px 5px 0 0; display: flex; justify-content: flex-end; overflow: hidden; border: solid #999; border-width: 0 1px 1px 0; background: #fafafa; color: #d2534b; font: italic 16px/22px "Open Sans", sans-serif; }
.menus { display: flex; gap: 14px; width: 421px; padding-left: 55px; }
.pin { width: 50px; height: 30px; padding-left: 16px; border-right: 2px solid #aaa; }
.quick { display: flex; align-items: center; padding-left: 13px; }
.q { width: 25px; height: 26px; }
.q.w { width: 27px; }
.c { width: 12px; height: 26px; }
.pick { display: flex; margin: 0 1px; border: 1px solid #999; }
.pick button { height: 25px; }
.pick .on { width: 25px; background: #b9b9b9; border-right: 1px solid #999; }
.title { flex: 1; text-align: center; }
.search { width: 203px; height: 23px; margin-right: 8px; padding: 0 3px 0 5px; display: flex; align-items: center; gap: 4px; border: 2px solid #1d1d2a; background: #eef0f4; }
.search input { flex: 1; width: 20px; border: 0; padding: 0; background: none; font: inherit; }
.search input::placeholder { color: #666; opacity: 1; }
.user { width: 10px; justify-content: flex-start; overflow: hidden; }

.ribbonrow { display: flex; align-items: flex-start; height: 86px; flex: none; }
.ribbon { display: flex; width: 877px; height: 86px; padding-top: 5px; border-right: 1px solid #888; }
.grp { display: flex; align-items: flex-start; height: 79px; border-right: 1px solid #c4c4c4; }
.grp:last-child { border: 0; }
.big { flex-direction: column; justify-content: flex-start; line-height: 13px; width: 41px; padding-top: 13px; }
.g0 { width: 76px; }
.g0 .big { margin-left: 8px; }
.g0 .spell { margin-left: -20px; position: relative; }
.abc { position: absolute; top: 9px; right: 12px; font: bold 10px/12px "Liberation Sans", sans-serif; }
.g1 { width: 333px; }
.g1 .big { width: 38px; }
.g1 .patt { width: 41px; margin-left: 4px; padding-top: 9px; }
.big .aaa { font: 8px/8px "Liberation Sans", sans-serif; margin-bottom: 1px; }
.patt .i8 { margin-top: 13px; }
.col { display: flex; flex-direction: column; }
.col button { height: 26px; gap: 7px; justify-content: flex-start; }
.col .i20 { margin: 0 -1px; }
.c1 { width: 121px; padding-left: 6px; }
.c1 button { width: 108px; }
.c2 { width: 120px; padding-left: 1px; }
.g2 { width: 93px; padding-left: 5px; }
.g3 { width: 32px; }
.g4 { width: 226px; padding-left: 5px; }
.c3 { width: 132px; }
.g5 { width: 40px; }
.tall { width: 33px; padding-top: 8px; }
.g5 .tall { width: 40px; padding-top: 6px; }
.tall .i8 { margin-top: 25px; }
.linebar { display: flex; align-items: center; width: 210px; height: 33px; padding-left: 13px; border: solid #888; border-width: 0 1px 1px 0; background: radial-gradient(circle, #999 1px, transparent 1px) 1px 2px / 5px 5px repeat-y; }
.linebar button { width: 27px; height: 30px; }

.tabrow { display: flex; height: 24px; flex: none; background: #c6c8c8; border-top: 1px solid #999; }
.tabs { display: flex; width: 293px; height: 22px; }
.tabs button { height: 22px; padding-bottom: 2px; background: #d6d4d9; border-right: 1px solid #888; }
.latin { font-size: 12px; }
.t1 { width: 52px; }
.t2 { width: 56px; }
.t3 { width: 117px; }
.t4 { width: 68px; }
.ruler { flex: 1; height: 17px; margin-top: 3px; background: #e7e9df; border: solid #000; border-width: 1px 0; }
.ruler text { font: 10px "DejaVu Sans Mono", monospace; text-anchor: middle; }

.work { flex: 1; display: flex; min-height: 600px; border-top: 1px solid #000; }
.panel { width: 126px; flex: none; display: flex; flex-direction: column; border-right: 1px solid #777; }
.panel > div { margin-right: 2px; }
.p1 { height: 6px; border-top: 2px solid #b4bab0; border-bottom: 1px solid #aaa; }
.p2 { height: 15px; padding: 5px 6px; border-bottom: 1px solid #aaa; }
.p2 .dot { display: block; }
.p3 { height: 30px; border-bottom: 1px solid #aaa; }
.p4 { height: 63px; padding: 8px 11px; display: flex; justify-content: flex-end; border-bottom: 1px solid #aaa; }
.p4 button { height: 16px; }
.pbody { flex: 1; display: flex; justify-content: space-between; height: 0; }
.secs { width: 101px; overflow: hidden; }
.secs section { display: flex; flex-direction: column; align-items: flex-start; border-bottom: 1px solid #999; }
.secs section:last-child { border: 0; }
.fold { height: 27px; width: 99px; justify-content: flex-end; }
.s1 { height: 89px; padding-top: 1px; }
.s2 { height: 118px; gap: 1px; }
.s2 .fold { height: 26px; }
.s3 { height: 143px; }
.s4 { height: 81px; }
.s5 { height: 88px; }
.s6 { height: 124px; }
.s7 { height: 74px; }
.stars { display: flex; margin: 1px 0 4px -14px; }
.stars button { width: 24px; height: 24px; border: 1px solid #999; background: #fff; }
.sq { width: 24px; height: 24px; margin-left: -11px; border: 1px solid #888; background: #fff; }
.w16 { margin: 0 0 38px -8px; }
.secs input { height: 20px; border: 1px solid #666; border-left: 0; background: #fff; padding: 0 4px 1px; font: 12px "Noto Sans", sans-serif; }
.secs .w57 { width: 57px; }
.secs .w33 { width: 33px; border-left: 1px solid #666; }
.secs .w21 { width: 21px; }
.secs .w72 { width: 72px; }
.thick { width: 59px; height: 3px; margin: 2px 0 4px; background: #000; }
.pair { display: flex; gap: 3px; margin-bottom: 6px; }
.sel { position: relative; height: 21px; border: 1px solid #999; border-left: 0; }
.s3 .sel { margin-top: 6px; }
.sel select { width: 100%; height: 100%; border: 0; padding: 0; appearance: none; background: none; font: inherit; color: #111; }
.s3 select { margin-left: -8px; display: block; }
.sel .chev { position: absolute; right: 3px; top: 6px; }
.gray { background: #e4e2e4; }
.sel.w93 { width: 93px; }
.sel.w90 { width: 90px; height: 22px; margin-top: 9px; border-color: #ccc; }
.off .chev { color: #bbb; }
.off::before { content: ""; position: absolute; left: 0; top: 11px; width: 65px; border-top: 1px solid #bbb; }
.green { background: linear-gradient(#cfe9d2, #cfe9d2) 0 2px / 73px 18px no-repeat #fff; }
.sel.green { height: 24px; border-color: #777; }
.sel.green .chev { top: 8px; }
.lab { height: 15px; line-height: 14px; display: flex; justify-content: flex-end; overflow: hidden; white-space: nowrap; }
.l46 { width: 46px; margin-bottom: 6px; }
.l43 { width: 43px; }
.dots { width: 15px; height: 21px; background: #ccc; border: 1px solid #aaa; border-left: 0; }
.secs .dots { color: #777; }
.spin { width: 14px; margin-left: 2px; display: flex; flex-direction: column; justify-content: space-between; align-items: center; background: #f0f0f0; }
.spin .chev { color: #333; }
.scroll { width: 15px; margin-right: 4px; padding: 6px 0; display: flex; flex-direction: column; align-items: center; background: #f3f3f3; }
.scroll .chev { color: #444; }
.scroll .thumb { width: 15px; flex: 593 1 0; margin: 4px 0 0; background: #cdcdcd; }
.scroll::after { content: ""; order: 1; flex: 91 1 0; }
.scroll .chev:last-child { order: 2; }

.view { flex: 1; position: relative; overflow: hidden; background: linear-gradient(165deg, #fff 0, #fcfdff 25%, #e6eaf6 62%, #d7dcea 88%, #dadeeb 100%) 0 0 / 270px 100% no-repeat; }
.sheet { position: absolute; inset: 0; width: 100%; height: 100%; }
.zone text { font: 13px "DejaVu Sans", sans-serif; text-anchor: middle; fill: #000; }
.fin { color: #25689c; }
.fin .pale { color: #6f9bc4; }
.tiny { font: 7px "Liberation Sans", sans-serif; fill: currentColor; stroke: none; }
.tbl { color: #25689c; fill: none; stroke: #25719f; stroke-width: 1; }
.red { fill: none; stroke: #bd2e2e; stroke-width: 1; }
.red .head { fill: #bd2e2e; }
.red text { font: 9px "Liberation Sans", "Noto Sans CJK SC", sans-serif; fill: #b02020; stroke: none; }
.red .tilt { font-size: 8px; font-style: italic; }
.hud { position: absolute; left: 700px; top: 4px; display: flex; align-items: center; }
.hud button { width: 26px; height: 24px; }
.hud .c { width: 14px; opacity: .6; }
.flyout { position: absolute; left: -1px; top: 397px; width: 9px; height: 39px; background: #fafafa; border: 1px solid #777; border-left: 0; }
.winbtn { position: absolute; right: 0; top: 10px; width: 2px; height: 14px; border: 1px solid #777; border-right: 0; }
.toast { position: absolute; right: -80px; bottom: 2px; width: 277px; height: 85px; padding: 0 5px; border: 1px solid #000; background: #fafafa; white-space: nowrap; }
.toast strong { display: block; font-size: 14px; line-height: 14px; }
.msg { display: flex; align-items: flex-start; gap: 20px; padding: 0 3px; margin-top: 8px; }
.links { display: flex; justify-content: space-between; width: 223px; margin: 18px 0 0 32px; }
.links a { color: #2b2ba0; }
.links a + a { width: 78px; }

.bottom { height: 49px; flex: none; border: solid #888; border-width: 1px 0; }
.sheets { display: flex; height: 15px; overflow: hidden; }
.st { width: 31px; height: 15px; padding: 0 10px 3px 0; justify-content: flex-end; overflow: hidden; border-right: 1px solid #888; }
.add { width: 37px; height: 15px; background: #d3d3d6; border-right: 1px solid #888; }
.filters { display: flex; align-items: center; height: 32px; width: 837px; border-right: 1px solid #888; }
.fcombo { width: 11px; height: 26px; border: 1px solid #888; border-left: 0; justify-content: flex-start; }
.fsel { width: 30px; height: 22px; border-right: 1px solid #aaa; margin-right: 6px; }
.flist { display: flex; padding-top: 1px; }
.flist button { width: 27px; height: 24px; }
.flist svg { width: 22px; height: 20px; }

.status { height: 18px; flex: none; display: flex; align-items: flex-start; font: 12px/20px "Noto Sans", "Noto Sans CJK SC", sans-serif; white-space: nowrap; }
.status b { font-weight: 400; font-size: 13px; }
.status > * { height: 18px; }
.ver { width: 81px; display: flex; justify-content: flex-end; overflow: hidden; margin-right: auto; }
.x { width: 78px; }
.y { width: 65px; }
.z { width: 37px; margin-right: 4px; overflow: hidden; }
.def { width: 43px; border-right: 1px solid #bbb; }
.edit { width: 83px; margin-left: 7px; padding-left: 4px; border: solid #bbb; border-width: 0 1px; }
.scale { width: 64px; padding-left: 26px; }
.tri { width: 27px; padding: 7px 0 0 8px; }
.tl { width: 30px; padding: 2px 0 0 7px; border-right: 1px solid #bbb; }
.cust { width: 41px; padding-left: 26px; overflow: hidden; }
```
